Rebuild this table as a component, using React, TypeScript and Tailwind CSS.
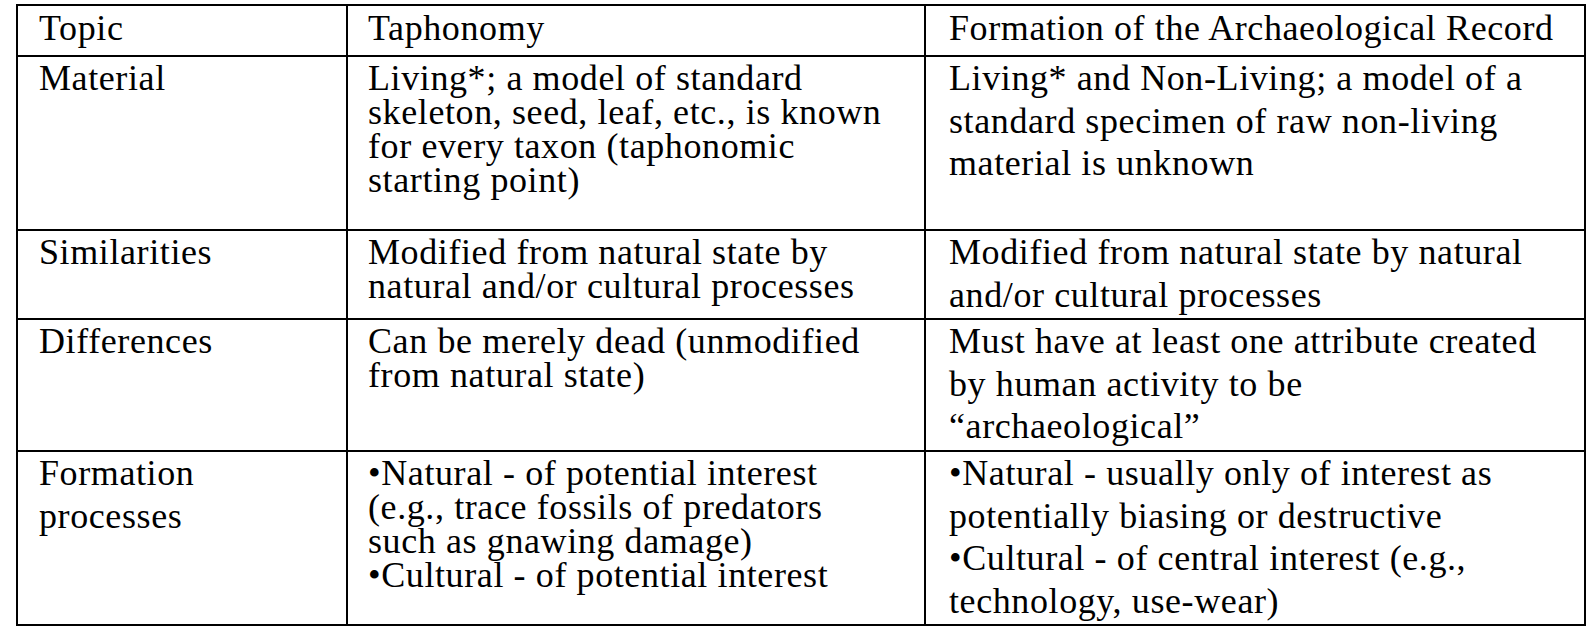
type Row = {
  h: string;
  topic: string[];
  taph: string[];
  form: string[];
};

const rows: Row[] = [
  {
    h: "h-[49px]",
    topic: ["Topic"],
    taph: ["Taphonomy"],
    form: ["Formation of the Archaeological Record"],
  },
  {
    h: "h-[174px] border-t-2",
    topic: ["Material"],
    taph: [
      "Living*; a model of standard",
      "skeleton, seed, leaf, etc., is known",
      "for every taxon (taphonomic",
      "starting point)",
    ],
    form: [
      "Living* and Non-Living; a model of a",
      "standard specimen of raw non-living",
      "material is unknown",
    ],
  },
  {
    h: "h-[89px] border-t-2",
    topic: ["Similarities"],
    taph: ["Modified from natural state by", "natural and/or cultural processes"],
    form: ["Modified from natural state by natural", "and/or cultural processes"],
  },
  {
    h: "h-[132px] border-t-2",
    topic: ["Differences"],
    taph: ["Can be merely dead (unmodified", "from natural state)"],
    form: [
      "Must have at least one attribute created",
      "by human activity to be",
      "\u201Carchaeological\u201D",
    ],
  },
  {
    h: "h-[174px] border-t-2",
    topic: ["Formation", "processes"],
    taph: [
      "\u2022Natural - of potential interest",
      "(e.g., trace fossils of predators",
      "such as gnawing damage)",
      "\u2022Cultural - of potential interest",
    ],
    form: [
      "\u2022Natural - usually only of interest as",
      "potentially biasing or destructive",
      "\u2022Cultural - of central interest (e.g.,",
      "technology, use-wear)",
    ],
  },
];

function Lines({ items }: { items: string[] }) {
  return (
    <>
      {items.map((t) => (
        <div key={t} className="whitespace-nowrap">
          {t}
        </div>
      ))}
    </>
  );
}

export default function App() {
  return (
    <div className="min-h-[640px] bg-white pl-4 pt-1 [font-family:'Liberation_Serif','Times_New_Roman',serif] text-[36px] tracking-[0.6px] text-black">
      <div className="w-[1570px] border-2 border-black">
        {rows.map((row, i) => {
          const head = i === 0;
          return (
            <div
              key={i}
              className={`grid grid-cols-[328px_578px_660px] border-black ${row.h}`}
            >
              <div className={head ? "pl-[21px] pt-[3px] leading-[38px]" : "pl-[21px] leading-[43px]"}>
                <Lines items={row.topic} />
              </div>
              <div
                className={
                  head
                    ? "border-l-2 border-black pl-[20px] pt-[3px] leading-[38px]"
                    : "border-l-2 border-black pl-[20px] pt-[4px] leading-[34px]"
                }
              >
                <Lines items={row.taph} />
              </div>
              <div
                className={
                  head
                    ? "border-l-2 border-black pl-[23px] pt-[3px] leading-[38px]"
                    : "border-l-2 border-black pl-[23px] leading-[42.5px]"
                }
              >
                <Lines items={row.form} />
              </div>
            </div>
          );
        })}
      </div>
    </div>
  );
}
